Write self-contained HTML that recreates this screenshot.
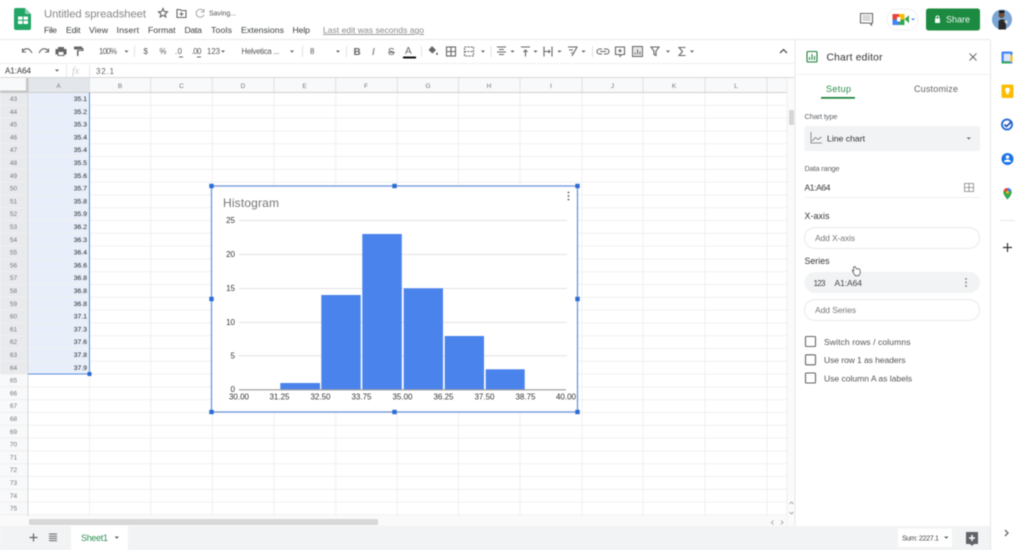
<!DOCTYPE html>
<html><head><meta charset="utf-8"><title>Untitled spreadsheet</title>
<style>
html,body{margin:0;padding:0;width:1024px;height:550px;overflow:hidden;background:#fff}
svg{display:block;filter:blur(.4px)}
text{font-family:"Liberation Sans",sans-serif}
.m{font-size:8.7px;fill:#3c4043}
.t{font-size:7.800px;fill:#555}
.h{font-size:6.5px;fill:#777;text-anchor:middle}
.r{font-size:6.5px;fill:#777;text-anchor:middle}
.v{font-size:6.8px;fill:#222;text-anchor:end}
.ax{font-size:8px;fill:#333}
.i{fill:none;stroke:#666;stroke-width:1.1}
.f{fill:#666}
.p{font-size:8.5px;fill:#777}
</style></head><body>
<svg width="1024" height="550" viewBox="0 0 1024 550" xmlns="http://www.w3.org/2000/svg">
<rect width="1024" height="550" fill="#fff"/>

<!-- title bar -->
<path d="M16 8h9l6 6v14a2 2 0 0 1-2 2H16a2 2 0 0 1-2-2V10a2 2 0 0 1 2-2z" fill="#23a566"/>
<path d="M25 8l6 6h-6z" fill="#8ed1b1"/>
<rect x="18" y="16.500" width="10" height="7.500" fill="#fff"/>
<path d="M18 20.200h10M23 16.500v7.500" stroke="#23a566" stroke-width="1"/>
<text x="44" y="17.500" font-size="11.300" fill="#888" textLength="102">Untitled spreadsheet</text>
<path d="M163 8.500l1.300 3 3.200.3-2.400 2.100.7 3.100-2.800-1.700-2.800 1.700.7-3.100-2.400-2.100 3.200-.3z" class="i" stroke-width="1"/>
<path d="M177 9.500h3l1 1h5v7h-9z" class="i"/><path d="M181.500 12v4M179.500 14h4" class="i" stroke-width=".9"/>
<path d="M203.500 11a4 4 0 1 0 .5 3.500" fill="none" stroke="#aaa" stroke-width="1"/><path d="M204 9v3h-3" fill="none" stroke="#aaa" stroke-width="1"/>
<text x="209" y="15.500" font-size="7" fill="#555" textLength="27">Saving...</text>
<text x="44" y="33" class="m" textLength="13">File</text>
<text x="66" y="33" class="m" textLength="14.500">Edit</text>
<text x="89" y="33" class="m" textLength="19">View</text>
<text x="116.500" y="33" class="m" textLength="22.500">Insert</text>
<text x="148" y="33" class="m" textLength="27.500">Format</text>
<text x="184.500" y="33" class="m" textLength="17.500">Data</text>
<text x="211" y="33" class="m" textLength="21">Tools</text>
<text x="241" y="33" class="m" textLength="43">Extensions</text>
<text x="292.500" y="33" class="m" textLength="17.500">Help</text>
<text x="323" y="33" font-size="8.500" fill="#888" text-decoration="underline" textLength="101">Last edit was seconds ago</text>

<path d="M860.500 13.500h12v9.500h-1v2l-2-2h-9z" class="i"/><path d="M862.500 16h8M862.500 18h8M862.500 20h8" stroke="#999" stroke-width=".8"/>
<rect x="887" y="9" width="31" height="21" rx="10.500" fill="#fff" stroke="#f0f0f0"/>
<rect x="892.500" y="14" width="6.500" height="5.500" fill="#ea4335"/><rect x="899" y="14" width="5.500" height="5.500" fill="#fbbc04"/><rect x="892.500" y="19.500" width="6.500" height="5.500" fill="#4285f4"/><rect x="899" y="19.500" width="5.500" height="5.500" fill="#34a853"/><path d="M904.500 19l4.500-3.800v8z" fill="#34a853"/><rect x="897" y="17" width="3.500" height="4.500" fill="#fff"/>
<path d="M911 18.500h4l-2 2z" fill="#4285f4"/>
<rect x="926" y="8.500" width="54" height="22" rx="2.500" fill="#1c8a40"/>
<rect x="935" y="18.500" width="5" height="4.500" rx=".6" fill="#fff"/><path d="M936 18.500v-1a1.500 1.500 0 0 1 3 0v1" fill="none" stroke="#fff" stroke-width=".9"/>
<text x="946" y="22.500" font-size="9" fill="#eef6f0" textLength="24">Share</text>
<circle cx="1002" cy="19.500" r="10" fill="#7aa5d4"/><path d="M998.500 29.500v-8.500l2-1.500h3.500l2 1.500v8.500z" fill="#2a2a2a"/><path d="M1004 21l3-1 1 3-2 1z" fill="#cfd8e0"/><circle cx="1001.500" cy="15" r="3" fill="#6d4c38"/><rect x="999" y="10.500" width="5.500" height="2.500" fill="#1a1a1a"/>

<path d="M0 39.500H990" stroke="#e8e8e8" stroke-width="1"/>

<!-- toolbar -->
<g class="i">
<path d="M22.500 52a4.500 4.500 0 0 1 8-1.300l1.500 2.300M22.500 48.500v3.500H26"/>
<path d="M48.500 52a4.500 4.500 0 0 0-8-1.300L39 53M48.500 48.500v3.500H45"/>
</g>
<path d="M58 47h6v2h2.500v5.500H64.500V56h-7V54.500H55.500V49H58z" class="f"/><rect x="58.500" y="52" width="5" height="3" fill="#fff"/>
<path d="M74 46.500h8v3h-8zM82 48h1.500v3H78.500v5h-1.500v-6h5z" class="f"/>
<path d="M134.500 46v11M302.500 46v11M346.500 46v11M421.500 46v11M491 46v11M592.500 46v11" stroke="#e2e2e2"/>
<text x="99" y="54" class="t" textLength="18">100%</text>
<path d="M124.500 50.500h4l-2 2.200z" class="f"/>
<text x="143.500" y="54" class="t">$</text>
<text x="159.500" y="54" class="t">%</text>
<text x="175" y="54" class="t" textLength="7">.0</text><path d="M179 57h4" stroke="#666"/>
<text x="191.500" y="54" class="t" textLength="10">.00</text><path d="M197 57h4" stroke="#666"/>
<text x="207" y="54" class="t" textLength="13">123</text><path d="M221 50.500h4l-2 2.200z" class="f"/>
<text x="241.500" y="54" class="t" textLength="38">Helvetica ...</text><path d="M290 50.500h4l-2 2.200z" class="f"/>
<text x="310" y="54" class="t">8</text><path d="M336 50.500h4l-2 2.200z" class="f"/>
<text x="353.500" y="55" font-size="10" font-weight="bold" fill="#666">B</text>
<text x="372" y="55" font-size="10" font-style="italic" fill="#666">I</text>
<text x="388" y="55" font-size="10" fill="#666" text-decoration="line-through">S</text>
<text x="405" y="54" font-size="10" fill="#666">A</text><rect x="403" y="56.500" width="13" height="2" fill="#111"/>
<path d="M432 46l4 4-3.500 3.500-4-3.500zM437 52l1 2a1 1 0 0 1-2 0z" class="f"/>
<g class="i" stroke-width="1"><rect x="446.500" y="47" width="9" height="9"/><path d="M451 47v9M446.500 51.500h9"/></g>
<g class="i" stroke-width="1" stroke-dasharray="2 1"><rect x="464.500" y="47" width="9" height="9"/><path d="M464.500 51.500h9"/></g><path d="M481 50.500h4l-2 2.200z" class="f"/>
<path d="M497 47h9M499 49.500h5M497 52h9M499 54.500h5" class="i" stroke-width="1"/><path d="M510.500 50.500h4l-2 2.200z" class="f"/>
<path d="M521 47h9M525.500 56.500V50M523.500 52l2-2 2 2" class="i" stroke-width="1"/><path d="M533.500 50.500h4l-2 2.200z" class="f"/>
<path d="M544 46.500v10M552 46.500v10M544 51.500h6M548.500 50l1.500 1.500-1.500 1.500" class="i" stroke-width="1"/><path d="M557.500 50.500h4l-2 2.200z" class="f"/>
<path d="M568 47h9l-5 9M569 50h4M571 53h2" class="i" stroke-width="1"/><path d="M581.500 50.500h4l-2 2.200z" class="f"/>
<path d="M602 49h-2.500a2.500 2.500 0 0 0 0 5h2.500M604 49h2.500a2.500 2.500 0 0 1 0 5H604M600 51.500h6" class="i"/>
<path d="M615.500 47h9v7.500h-2.500l-2 1.800v-1.800h-4.500zM620 49v3.500M618.200 50.800h3.600" class="i" stroke-width="1"/>
<rect x="632.500" y="46.500" width="10" height="10" fill="#e6e6e6" stroke="#666"/><path d="M635 54.500v-2M637.500 54.500v-5M640 54.500v-3" stroke="#666"/>
<path d="M651 47h8l-3 4v4.500l-2-1V51z" class="i" stroke-width="1"/><path d="M666 50.500h4l-2 2.200z" class="f"/>
<path d="M685.500 47.500H679l3.500 4-3.500 4h6.500" class="i"/><path d="M690 50.500h4l-2 2.200z" class="f"/>
<path d="M780 53l3.500-3.500L787 53" fill="none" stroke="#555" stroke-width="1.300"/>

<!-- formula bar -->
<path d="M0 63.500H795" stroke="#f0f0f0"/>
<text x="5" y="73.500" font-size="8" fill="#333" textLength="26">A1:A64</text>
<path d="M55 69.500h4l-2 2.200z" class="f"/>
<path d="M66.500 65v12M89.500 65v12" stroke="#e8e8e8"/>
<text x="72" y="74" font-size="10" font-style="italic" fill="#c8c8c8" style="font-family:'Liberation Serif',serif">fx</text>
<text x="96" y="74" font-size="8" fill="#666" letter-spacing=".8">32.1</text>
<path d="M0 77.500H795" stroke="#d8d8d8"/>

<!-- grid backgrounds -->
<rect x="0" y="78" width="787" height="14.500" fill="#f8f9fa"/>
<rect x="0" y="92.500" width="28" height="423" fill="#f8f9fa"/>
<rect x="0" y="92.500" width="28" height="281.500" fill="#e8eaed"/>
<rect x="28" y="78" width="62" height="14.500" fill="#e3e6ea"/>
<rect x="28" y="92.500" width="62" height="281.500" fill="#e8effb"/>

<!-- gridlines -->
<g stroke="#f0f0f0" stroke-width="1">
<path d="M0 105.300H787M0 118.100H787M0 130.900H787M0 143.700H787M0 156.500H787M0 169.300H787M0 182.100H787M0 194.900H787M0 207.700H787M0 220.500H787M0 233.300H787M0 246.100H787M0 258.900H787M0 271.700H787M0 284.500H787M0 297.300H787M0 310.100H787M0 322.900H787M0 335.700H787M0 348.500H787M0 361.300H787M0 374.100H787M0 386.900H787M0 399.700H787M0 412.500H787M0 425.300H787M0 438.100H787M0 450.900H787M0 463.700H787M0 476.500H787M0 489.300H787M0 502.100H787M0 514.900H787"/>
<path d="M89.500 92V516M150.700 92V516M212.300 92V516M274 92V516M335.700 92V516M397.300 92V516M458.500 92V516M520 92V516M582 92V516M643 92V516M705 92V516M767 92V516"/>
</g>
<g stroke="#e0e0e0"><path d="M89.500 78V92M150.700 78V92M212.300 78V92M274 78V92M335.700 78V92M397.300 78V92M458.500 78V92M520 78V92M582 78V92M643 78V92M705 78V92M767 78V92"/></g>
<path d="M0 92.500H787" stroke="#cfcfcf"/>
<rect x="26" y="78" width="2.500" height="15" fill="#c6c6c6"/><rect x="0" y="90.500" width="28" height="2.500" fill="#c6c6c6"/>
<path d="M28 92.500V516" stroke="#d8d8d8"/>

<text x="58.500" y="88" class="h">A</text><text x="120" y="88" class="h">B</text><text x="181.500" y="88" class="h">C</text><text x="243" y="88" class="h">D</text><text x="304.500" y="88" class="h">E</text><text x="366" y="88" class="h">F</text><text x="428" y="88" class="h">G</text><text x="489" y="88" class="h">H</text><text x="551" y="88" class="h">I</text><text x="612.500" y="88" class="h">J</text><text x="674" y="88" class="h">K</text><text x="736" y="88" class="h">L</text>

<!-- row numbers -->
<text x="13.500" y="101" class="r">43</text><text x="13.500" y="113.800" class="r">44</text><text x="13.500" y="126.600" class="r">45</text><text x="13.500" y="139.400" class="r">46</text><text x="13.500" y="152.200" class="r">47</text><text x="13.500" y="165" class="r">48</text><text x="13.500" y="177.800" class="r">49</text><text x="13.500" y="190.600" class="r">50</text><text x="13.500" y="203.400" class="r">51</text><text x="13.500" y="216.200" class="r">52</text><text x="13.500" y="229" class="r">53</text><text x="13.500" y="241.800" class="r">54</text><text x="13.500" y="254.600" class="r">55</text><text x="13.500" y="267.400" class="r">56</text><text x="13.500" y="280.200" class="r">57</text><text x="13.500" y="293" class="r">58</text><text x="13.500" y="305.800" class="r">59</text><text x="13.500" y="318.600" class="r">60</text><text x="13.500" y="331.400" class="r">61</text><text x="13.500" y="344.200" class="r">62</text><text x="13.500" y="357" class="r">63</text><text x="13.500" y="369.800" class="r">64</text><text x="13.500" y="382.600" class="r">65</text><text x="13.500" y="395.400" class="r">66</text><text x="13.500" y="408.200" class="r">67</text><text x="13.500" y="421" class="r">68</text><text x="13.500" y="433.800" class="r">69</text><text x="13.500" y="446.600" class="r">70</text><text x="13.500" y="459.400" class="r">71</text><text x="13.500" y="472.200" class="r">72</text><text x="13.500" y="485" class="r">73</text><text x="13.500" y="497.800" class="r">74</text><text x="13.500" y="510.600" class="r">75</text>

<!-- values -->
<text x="87" y="101" class="v">35.1</text><text x="87" y="113.800" class="v">35.2</text><text x="87" y="126.600" class="v">35.3</text><text x="87" y="139.400" class="v">35.4</text><text x="87" y="152.200" class="v">35.4</text><text x="87" y="165" class="v">35.5</text><text x="87" y="177.800" class="v">35.6</text><text x="87" y="190.600" class="v">35.7</text><text x="87" y="203.400" class="v">35.8</text><text x="87" y="216.200" class="v">35.9</text><text x="87" y="229" class="v">36.2</text><text x="87" y="241.800" class="v">36.3</text><text x="87" y="254.600" class="v">36.4</text><text x="87" y="267.400" class="v">36.6</text><text x="87" y="280.200" class="v">36.8</text><text x="87" y="293" class="v">36.8</text><text x="87" y="305.800" class="v">36.8</text><text x="87" y="318.600" class="v">37.1</text><text x="87" y="331.400" class="v">37.3</text><text x="87" y="344.200" class="v">37.6</text><text x="87" y="357" class="v">37.8</text><text x="87" y="369.800" class="v">37.9</text>

<!-- selection -->
<path d="M89.500 92.500V374H28" fill="none" stroke="#5b8fe0" stroke-width="1"/>
<rect x="87.500" y="372" width="4" height="4" fill="#2b6cd4"/>

<!-- chart -->
<rect x="211.500" y="186" width="366" height="226" fill="#fff" stroke="#6d97d8" stroke-width="1.300"/>
<text x="223" y="207" font-size="12" fill="#757575" textLength="56">Histogram</text>
<g fill="#555"><circle cx="568.500" cy="192.500" r=".9"/><circle cx="568.500" cy="196" r=".9"/><circle cx="568.500" cy="199.500" r=".9"/></g>
<path d="M239 220.500H567M239 254.500H567M239 288.500H567M239 322.500H567M239 355.800H567" stroke="#e2e2e2"/>
<g fill="#4a83ec">
<rect x="280.300" y="383" width="39.700" height="6.700"/>
<rect x="321.300" y="295" width="39.400" height="94.700"/>
<rect x="362.300" y="234" width="39.500" height="155.700"/>
<rect x="403.700" y="288.300" width="39.300" height="101.400"/>
<rect x="444.700" y="336" width="39.300" height="53.700"/>
<rect x="485.700" y="369.300" width="39" height="20.400"/>
</g>
<path d="M239 389.800H566" stroke="#999" stroke-width="1.200"/>
<g class="ax" text-anchor="end">
<text x="235" y="223">25</text><text x="235" y="257">20</text><text x="235" y="291">15</text><text x="235" y="325">10</text><text x="235" y="358.500">5</text><text x="235" y="392">0</text>
</g>
<g class="ax" text-anchor="middle">
<text x="239" y="399.500">30.00</text><text x="279.500" y="399.500">31.25</text><text x="320.500" y="399.500">32.50</text><text x="361.500" y="399.500">33.75</text><text x="402.500" y="399.500">35.00</text><text x="443.500" y="399.500">36.25</text><text x="484.500" y="399.500">37.50</text><text x="525.500" y="399.500">38.75</text><text x="566" y="399.500">40.00</text>
</g>
<g fill="#2b6cd4">
<rect x="209.300" y="183.800" width="4.400" height="4.400"/><rect x="392.300" y="183.800" width="4.400" height="4.400"/><rect x="575.300" y="183.800" width="4.400" height="4.400"/>
<rect x="209.300" y="296.800" width="4.400" height="4.400"/><rect x="575.300" y="296.800" width="4.400" height="4.400"/>
<rect x="209.300" y="409.800" width="4.400" height="4.400"/><rect x="392.300" y="409.800" width="4.400" height="4.400"/><rect x="575.300" y="409.800" width="4.400" height="4.400"/>
</g>

<!-- scrollbars -->
<rect x="787" y="78" width="8" height="448" fill="#fbfbfb"/>
<path d="M787 78V526" stroke="#eeeeee"/>
<rect x="789" y="110" width="5" height="15" rx="1" fill="#d6d6d6"/>
<path d="M789.500 504l2-2 2 2M789.500 512l2 2 2-2" fill="none" stroke="#999" stroke-width=".8"/>
<rect x="0" y="516" width="787" height="10" fill="#fafafa"/>
<rect x="29" y="519" width="349" height="6" rx="1" fill="#d8d8d8"/>
<path d="M773.500 520.500l-2 2 2 2M781 520.500l2 2-2 2" fill="none" stroke="#999" stroke-width=".8"/>

<!-- bottom bar -->
<rect x="0" y="526" width="990" height="24" fill="#f1f3f4"/>
<path d="M29.500 537.500h8M33.500 533.500v8" stroke="#666" stroke-width="1.200"/>
<path d="M49 534h8M49 536.200h8M49 538.400h8M49 540.600h8" stroke="#666" stroke-width="1"/>
<rect x="71" y="526" width="57" height="24" fill="#fff"/>
<text x="81" y="541" font-size="9" fill="#2f9155" textLength="27">Sheet1</text>
<path d="M114.500 536.500h4.500l-2.200 2.400z" fill="#666"/>
<rect x="898" y="528.500" width="54" height="18.500" fill="#fff"/>
<text x="902" y="540.500" font-size="7.200" fill="#444" textLength="37">Sum: 2227.1</text>
<path d="M944 536.500h4.500l-2.200 2.400z" fill="#666"/>
<path d="M966 532h12v12h-4l-2 2-2-2h-4z" fill="#5f6368"/><path d="M972 535v6M969 538h6" stroke="#fff" stroke-width="1.500"/>

<!-- chart editor panel -->
<rect x="795" y="40" width="195" height="486" fill="#fff"/>
<path d="M795 40V526" stroke="#e8e8e8"/>
<path d="M990.500 40V550" stroke="#e6e6e6"/>
<path d="M795 74.500H990" stroke="#f2f2f2"/>
<rect x="807" y="51.500" width="10" height="10.500" rx="1" fill="none" stroke="#188038" stroke-width="1.100"/><path d="M809.500 60v-3M812 60v-6M814.500 60v-4" stroke="#188038"/>
<text x="826.500" y="60.500" font-size="10.300" fill="#333" textLength="56">Chart editor</text>
<path d="M969.500 53.500l7 7M976.500 53.500l-7 7" stroke="#666" stroke-width="1"/>
<text x="826" y="92" font-size="9" fill="#2b8a4d" textLength="25">Setup</text>
<rect x="821" y="97" width="34" height="1.700" fill="#188038"/>
<text x="914" y="92" font-size="9" fill="#5f6368" textLength="44">Customize</text>

<text x="804.500" y="119" font-size="7.500" fill="#5f6368" textLength="33">Chart type</text>
<rect x="804.500" y="126" width="175.500" height="25" rx="2" fill="#f1f3f4"/>
<path d="M811 132v11h11M812 141l3.500-3.500 2.500 2 3.500-2.500" fill="none" stroke="#777" stroke-width=".8"/>
<text x="827" y="141.500" font-size="8.700" fill="#333" textLength="38">Line chart</text>
<path d="M966.500 137.500h4.500l-2.200 2z" fill="#666"/>
<text x="804.500" y="171" font-size="7.500" fill="#5f6368" textLength="35">Data range</text>
<text x="804.500" y="190.500" font-size="8.500" fill="#333" textLength="26">A1:A64</text>
<path d="M805 197.500H980" stroke="#f0f0f0"/>
<g fill="none" stroke="#888" stroke-width=".8"><rect x="964.500" y="183.500" width="9" height="8"/><path d="M969 183.500v8M964.500 187.500h9"/></g>
<text x="804.500" y="219" font-size="8.800" fill="#333" textLength="25">X-axis</text>
<rect x="804.500" y="227.500" width="175" height="21" rx="10.500" fill="#fff" stroke="#e8e8e8"/>
<text x="815" y="241" class="p" textLength="40">Add X-axis</text>
<text x="804.500" y="264" font-size="8.800" fill="#333" textLength="25">Series</text>
<rect x="804.500" y="272" width="175.500" height="21" rx="10.500" fill="#f1f3f4"/>
<text x="813.500" y="286" font-size="8" fill="#444" textLength="12">123</text>
<text x="834.500" y="286" font-size="8.500" fill="#444" textLength="27.500">A1:A64</text>
<g fill="#777"><circle cx="966" cy="279" r=".9"/><circle cx="966" cy="282.500" r=".9"/><circle cx="966" cy="286" r=".9"/></g>
<rect x="804.500" y="299.500" width="175" height="21" rx="10.500" fill="#fff" stroke="#e8e8e8"/>
<text x="815" y="313" class="p" textLength="41">Add Series</text>
<g fill="#fff" stroke="#666" stroke-width="1.100">
<rect x="805.500" y="336.500" width="10" height="10" rx="1"/><rect x="805.500" y="354.800" width="10" height="10" rx="1"/><rect x="805.500" y="373" width="10" height="10" rx="1"/>
</g>
<text x="824" y="345" font-size="8.600" fill="#555" textLength="86.500">Switch rows / columns</text>
<text x="824" y="363" font-size="8.600" fill="#555" textLength="81.500">Use row 1 as headers</text>
<text x="824" y="381.500" font-size="8.600" fill="#555" textLength="88">Use column A as labels</text>
<!-- cursor -->
<path d="M853.500 267l1.500-.5 1.500 2.500 2-.3 1.500 1 .3 3-1.500 3h-3.500l-2.500-4-.5-1.500 1.500.5z" fill="#fff" stroke="#555" stroke-width=".8"/>

<!-- side panel -->
<rect x="1001.500" y="51.500" width="11" height="12" rx="1" fill="#4285f4"/><rect x="1003.700" y="53.700" width="6.800" height="7.500" fill="#dbe6fb"/><path d="M1001.500 61.500h8v2h-8z" fill="#34a853"/><path d="M1010.500 55h2v7h-2z" fill="#fbbc04"/>
<rect x="1001.500" y="84.500" width="12" height="13.500" rx="1.500" fill="#fbbc04"/><circle cx="1007.500" cy="90" r="2.500" fill="#fff"/><rect x="1006" y="92.500" width="3" height="1.500" fill="#fff"/>
<circle cx="1007" cy="124.500" r="5" fill="none" stroke="#2f6fdc" stroke-width="2"/><path d="M1004.500 124.500l2 2 5-5" fill="none" stroke="#1a4fb0" stroke-width="1.600"/>
<circle cx="1007.500" cy="159" r="6" fill="#1a73e8"/><circle cx="1007.500" cy="157" r="1.800" fill="#fff"/><path d="M1004 162a3.500 2.500 0 0 1 7 0z" fill="#fff"/>
<path d="M1007.500 188a4.200 4.200 0 0 1 4.200 4.200c0 3-4.200 7.300-4.200 7.300s-4.200-4.300-4.200-7.300a4.200 4.200 0 0 1 4.200-4.200z" fill="#34a853"/><path d="M1003.500 191a4.200 4.200 0 0 1 4-3v4z" fill="#ea4335"/><path d="M1007.500 188a4.200 4.200 0 0 1 4 2.800l-4 1.500z" fill="#4285f4"/><circle cx="1007.500" cy="192.300" r="1.400" fill="#fbbc04"/>
<path d="M1000 220.500h15" stroke="#e8e8e8"/>
<path d="M1003 247.500h9M1007.500 243v9" stroke="#333" stroke-width="1.200"/>
<path d="M1005 530l3 3-3 3" fill="none" stroke="#666" stroke-width="1.300"/>
</svg>
</body></html>
